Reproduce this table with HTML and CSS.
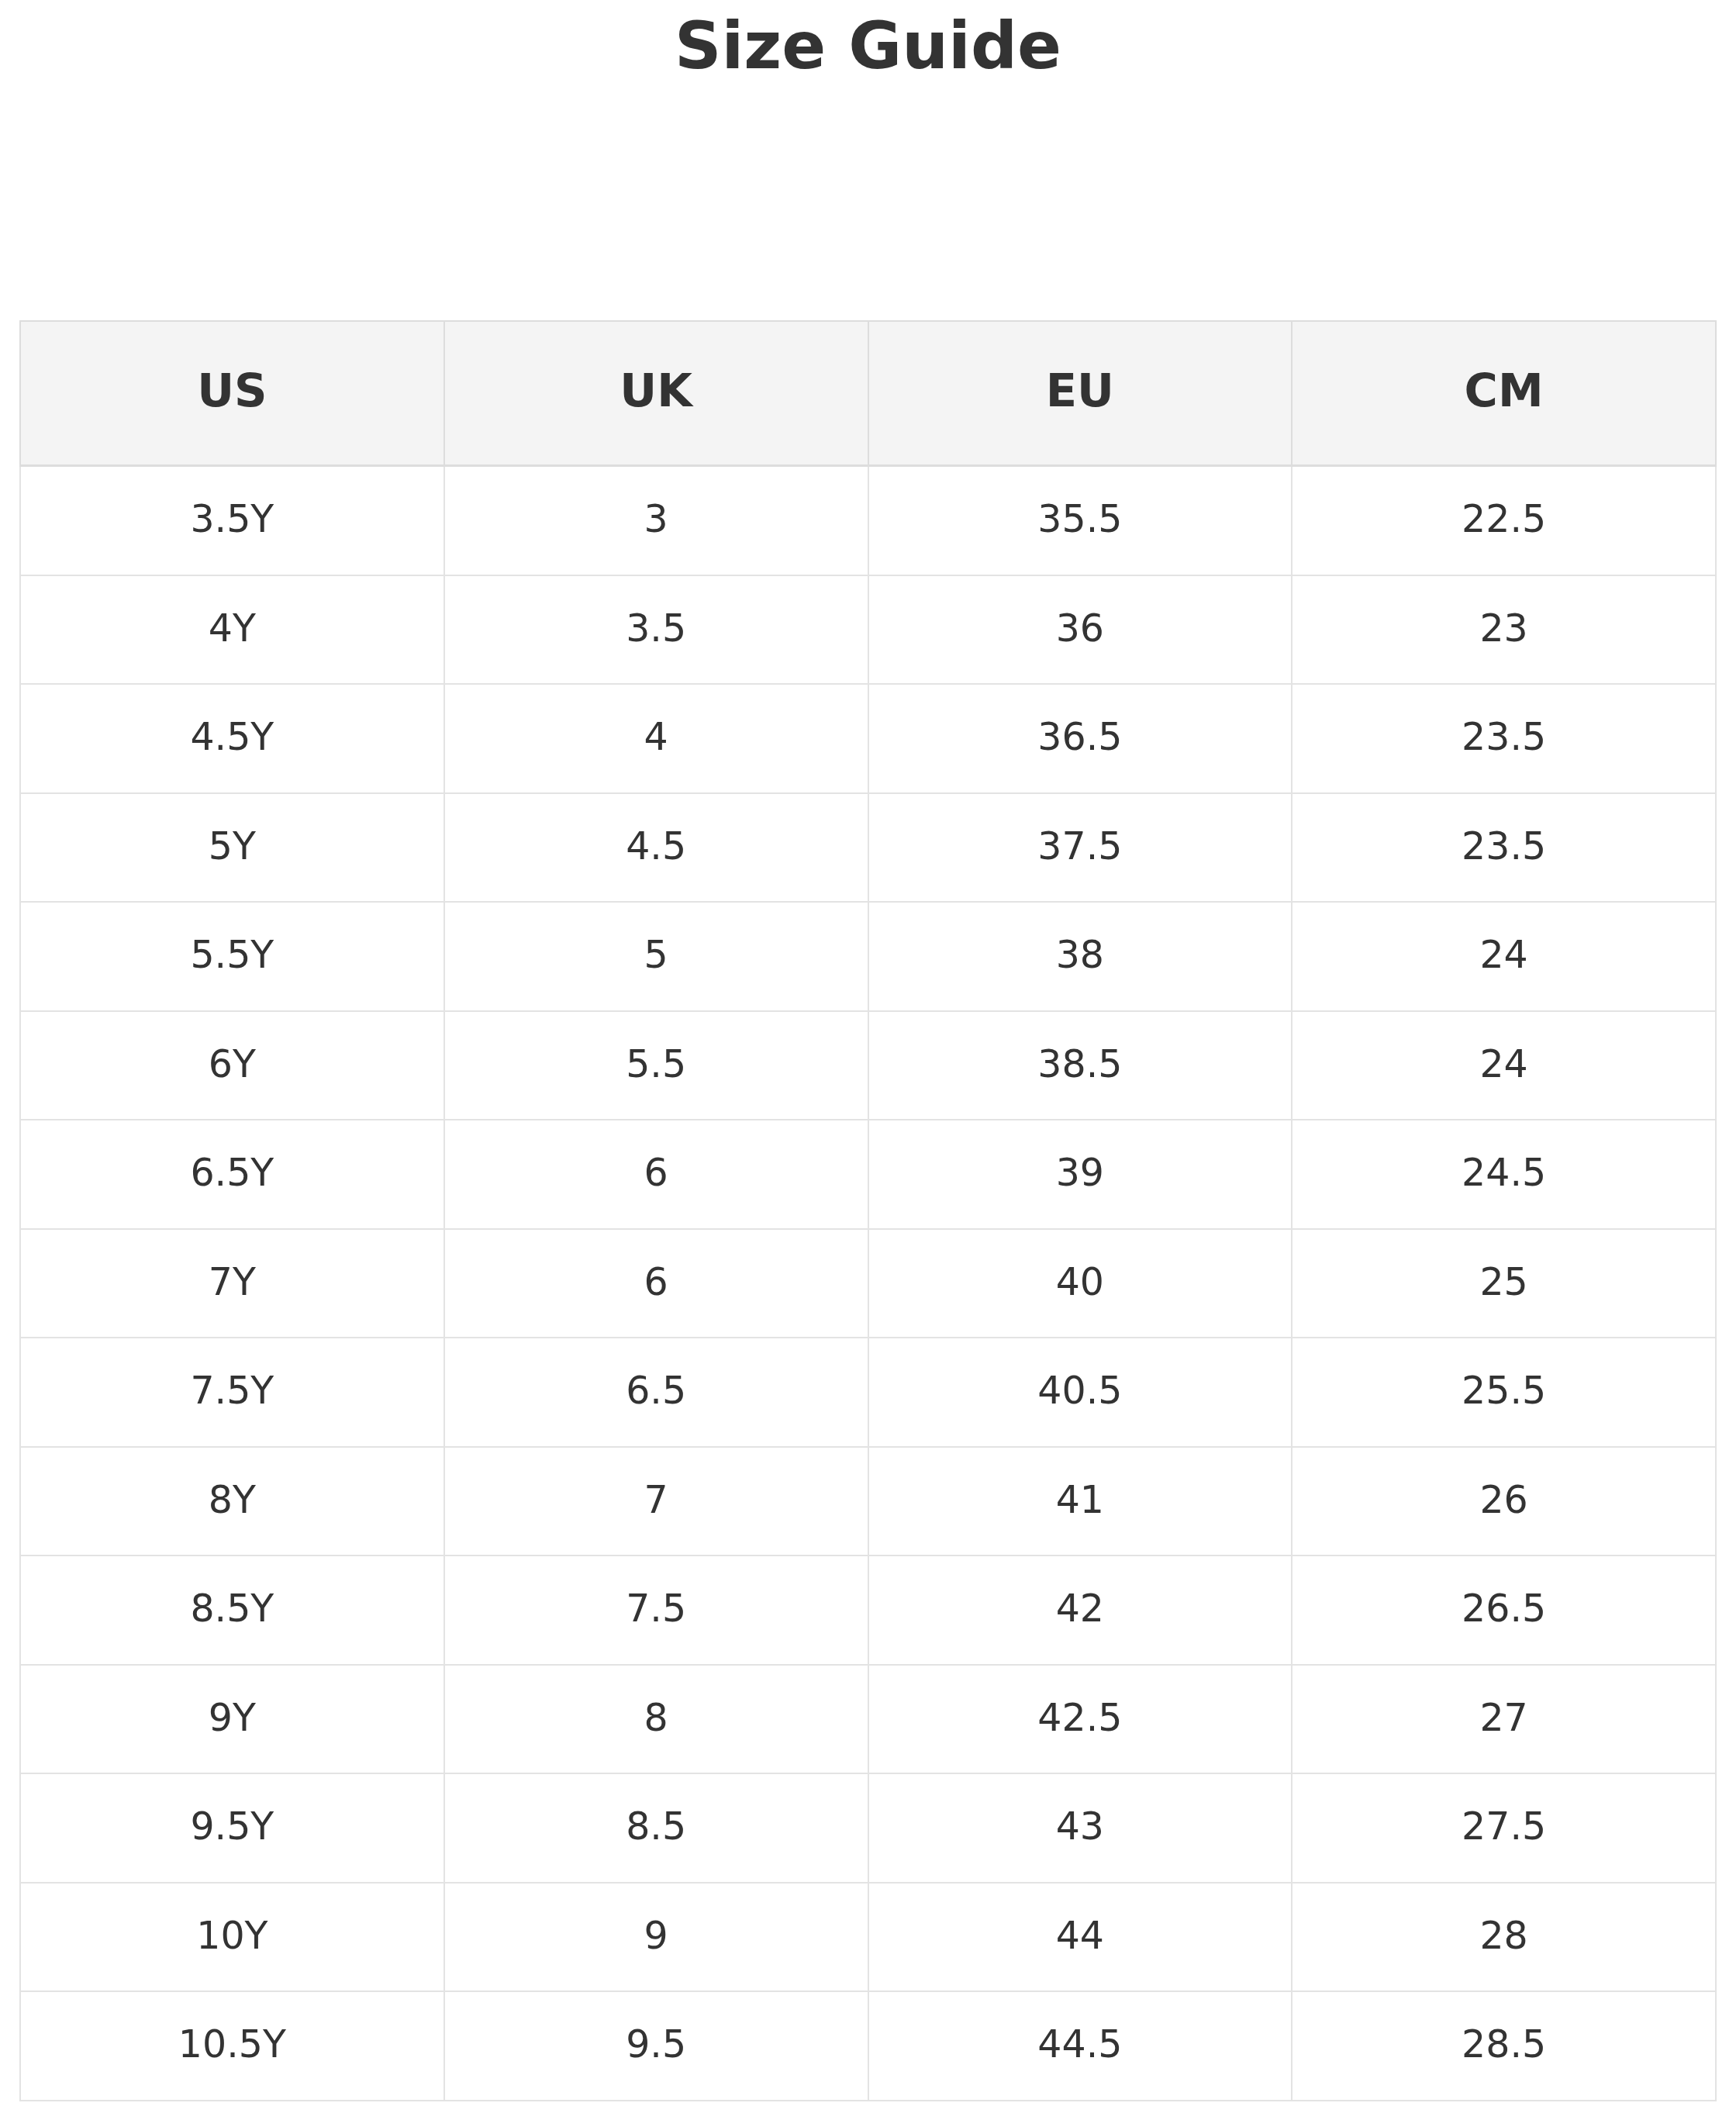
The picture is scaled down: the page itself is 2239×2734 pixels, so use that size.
FILE: index.html
```html
<!DOCTYPE html>
<html lang="en">
<head>
<meta charset="utf-8">
<title>Size Guide</title>
<link rel="stylesheet" href="styles.css">
</head>
<body>
<main class="page">
  <h1 class="title">Size Guide</h1>
  <table class="size-table">
    <thead>
      <tr><th>US</th><th>UK</th><th>EU</th><th>CM</th></tr>
    </thead>
    <tbody>
      <tr><td>3.5Y</td><td>3</td><td>35.5</td><td>22.5</td></tr>
      <tr><td>4Y</td><td>3.5</td><td>36</td><td>23</td></tr>
      <tr><td>4.5Y</td><td>4</td><td>36.5</td><td>23.5</td></tr>
      <tr><td>5Y</td><td>4.5</td><td>37.5</td><td>23.5</td></tr>
      <tr><td>5.5Y</td><td>5</td><td>38</td><td>24</td></tr>
      <tr><td>6Y</td><td>5.5</td><td>38.5</td><td>24</td></tr>
      <tr><td>6.5Y</td><td>6</td><td>39</td><td>24.5</td></tr>
      <tr><td>7Y</td><td>6</td><td>40</td><td>25</td></tr>
      <tr><td>7.5Y</td><td>6.5</td><td>40.5</td><td>25.5</td></tr>
      <tr><td>8Y</td><td>7</td><td>41</td><td>26</td></tr>
      <tr><td>8.5Y</td><td>7.5</td><td>42</td><td>26.5</td></tr>
      <tr><td>9Y</td><td>8</td><td>42.5</td><td>27</td></tr>
      <tr><td>9.5Y</td><td>8.5</td><td>43</td><td>27.5</td></tr>
      <tr><td>10Y</td><td>9</td><td>44</td><td>28</td></tr>
      <tr><td>10.5Y</td><td>9.5</td><td>44.5</td><td>28.5</td></tr>
    </tbody>
  </table>
</main>
</body>
</html>
```

FILE: styles.css
```css
html, body {
  margin: 0;
  padding: 0;
  background: #ffffff;
}

body {
  font-family: "DejaVu Sans", "Noto Sans", sans-serif;
  color: #333333;
}

.page {
  padding: 10px 25px 0;
}

.title {
  margin: 0;
  font-size: 84px;
  font-weight: bold;
  line-height: normal;
  text-align: center;
  color: #333333;
}

.size-table {
  width: 100%;
  margin-top: 305px;
  border-collapse: collapse;
  table-layout: fixed;
}

.size-table th,
.size-table td {
  border: 2px solid #e3e3e3;
  text-align: center;
}

.size-table th {
  background: #f4f4f4;
  font-size: 59px;
  font-weight: bold;
  line-height: 68px;
  padding: 55px 10px 61px;
  border-color: #dddddd;
  border-bottom-width: 3px;
}

.size-table td {
  font-size: 49px;
  font-weight: normal;
  line-height: 57px;
  padding: 39px 10px 42.5px;
}
```
